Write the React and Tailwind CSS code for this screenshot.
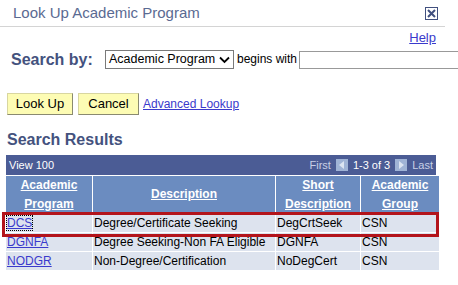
import React from 'react';

const rows = [
  { code: 'DCS', desc: 'Degree/Certificate Seeking', short: 'DegCrtSeek', group: 'CSN', focus: true },
  { code: 'DGNFA', desc: 'Degree Seeking-Non FA Eligible', short: 'DGNFA', group: 'CSN' },
  { code: 'NODGR', desc: 'Non-Degree/Certification', short: 'NoDegCert', group: 'CSN' },
];

const App = () => {
  return (
    <div className="w-[458px] h-[285px] overflow-hidden bg-white font-['Liberation_Sans',Arial,sans-serif]">
      {/* title bar */}
      <div className="flex items-center justify-between w-[445px] h-[27px] border-b border-[#d4d4d4] pl-[13px] pr-[7px]">
        <span className="text-[15px] text-[#5a6a92]">Look Up Academic Program</span>
        <span className="flex items-center justify-center w-[13px] h-[13px] border border-[#41507f] text-[#41507f]">
          <svg width="9" height="9" viewBox="0 0 9 9">
            <path d="M1 1 L8 8 M8 1 L1 8" stroke="currentColor" strokeWidth="2" />
          </svg>
        </span>
      </div>

      <div className="flex justify-end w-[436px] mt-[3px] leading-[16px]">
        <a className="text-[13px] text-[#3a3acc] underline">Help</a>
      </div>

      <div className="flex items-center mt-[4px] pl-[11px] whitespace-nowrap leading-[19px]">
        <span className="shrink-0 text-[16px] font-bold text-[#44527e] w-[94px]">Search by:</span>
        <div className="shrink-0 flex items-center justify-between w-[129px] h-[19px] border border-[#7a7a7a] pl-[3px] pr-[3px]">
          <span className="text-[12.5px] text-black">Academic Program</span>
          <svg width="11" height="8" viewBox="0 0 11 8">
            <path d="M1 1.5 L5.5 6 L10 1.5" stroke="#000" strokeWidth="1.8" fill="none" />
          </svg>
        </div>
        <span className="shrink-0 text-[12px] text-black ml-[3px] mr-[2px]">begins with</span>
        <div className="shrink-0 w-[170px] h-[18px] border border-[#999] border-r-0" />
      </div>

      <div className="flex items-center mt-[24px] pl-[7px] gap-[5px]">
        <button className="w-[66px] h-[22px] bg-[#fdfcb4] border border-[#d8d6a0] border-r-[#8a8a70] border-b-[#8a8a70] text-[13px] text-black">Look Up</button>
        <button className="w-[61px] h-[22px] bg-[#fdfcb4] border border-[#d8d6a0] border-r-[#8a8a70] border-b-[#8a8a70] text-[13px] text-black">Cancel</button>
        <a className="text-[12px] text-[#3a3acc] underline -ml-[1px]">Advanced Lookup</a>
      </div>

      <div className="pl-[7px] mt-[15px] text-[16px] font-bold text-[#44527e] leading-[20px]">Search Results</div>

      <div className="relative ml-[6px] mt-[5px] w-[430px]">
        <div className="flex items-center justify-between h-[20px] bg-[#4b5c95] px-[3px] text-[11px] text-white">
          <span>View 100</span>
          <div className="flex items-center gap-[5px]">
            <span className="text-[#c8d0e6]">First</span>
            <span className="flex items-center justify-center w-[12px] h-[12px] bg-[#9fb3d6]">
              <svg width="6" height="8" viewBox="0 0 6 8"><path d="M5 0 L0 4 L5 8 Z" fill="#dbe4f2" /></svg>
            </span>
            <span>1-3 of 3</span>
            <span className="flex items-center justify-center w-[12px] h-[12px] bg-[#9fb3d6]">
              <svg width="6" height="8" viewBox="0 0 6 8"><path d="M1 0 L6 4 L1 8 Z" fill="#dbe4f2" /></svg>
            </span>
            <span className="text-[#c8d0e6]">Last</span>
          </div>
        </div>
        <div className="grid grid-cols-[86px_182px_84px_78px] bg-white gap-x-[1px] gap-y-[1px] pt-[1px]">
          {[['Academic', 'Program'], ['Description'], ['Short', 'Description'], ['Academic', 'Group']].map((h, i) => (
            <div key={i} className="flex flex-col items-center justify-center h-[37px] bg-[#6b8cc0] text-[12px] font-bold text-white leading-[19px]">
              {h.map((t) => (
                <span key={t} className="underline">{t}</span>
              ))}
            </div>
          ))}
          {rows.map((r) => (
            <React.Fragment key={r.code}>
              <div className="h-[18px] bg-[#dde3ee] pl-[1px] text-[12px] leading-[18px]">
                <a className={`text-[#3a3acc] underline ${r.focus ? 'outline-1 outline-dotted outline-black' : ''}`}>{r.code}</a>
              </div>
              <div className="h-[18px] bg-[#dde3ee] pl-[1px] text-[12px] leading-[18px] text-black whitespace-nowrap">{r.desc}</div>
              <div className="h-[18px] bg-[#dde3ee] pl-[1px] text-[12px] leading-[18px] text-black">{r.short}</div>
              <div className="h-[18px] bg-[#dde3ee] pl-[1px] text-[12px] leading-[18px] text-black">{r.group}</div>
            </React.Fragment>
          ))}
        </div>
        <div className="absolute left-[-4px] top-[57px] w-[437px] h-[25px] border-[3px] border-[#b3141b]" />
      </div>
    </div>
  );
};

export default App;
